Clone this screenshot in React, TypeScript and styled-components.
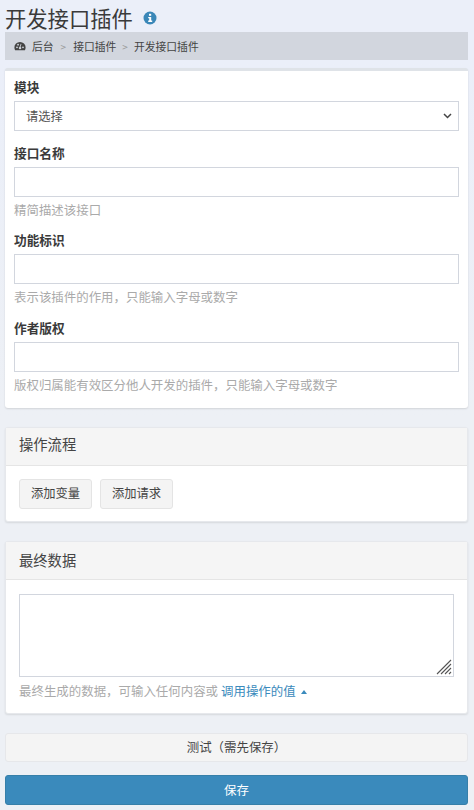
import React from "react";
import styled, { createGlobalStyle } from "styled-components";

const Global = createGlobalStyle`
  html, body { margin: 0; padding: 0; }
  body {
    width: 474px; height: 810px; overflow: hidden;
    background: linear-gradient(#ebeff9 0, #ebeff9 60px, #edf0f5 420px);
    font-family: "Noto Sans CJK SC", "Liberation Sans", sans-serif;
    color: #333;
  }
  * { box-sizing: border-box; }
`;

const Page = styled.div`
  display: flex; flex-direction: column;
  padding: 3px 6px 0 5px;
`;
const TitleRow = styled.div`
  display: flex; align-items: center; gap: 10px;
  height: 29px;
`;
const Title = styled.h1`
  margin: 0; font-size: 21.3px; font-weight: 400; line-height: 29px; color: #3a3a3a;
`;
const Crumbs = styled.div`
  display: flex; align-items: center; height: 28px;
  padding-left: 9px; background: #d2d6de; font-size: 10.8px; color: #444;
`;
const Sep = styled.span<{ $tight?: boolean }>`
  color: #999; margin: 0 ${p => (p.$tight ? 6 : 7)}px; font-size: 10px;
`;
const CrumbIcon = styled.svg`
  width: 12px; height: 12px; margin-right: 6px; fill: #444;
`;
const Card = styled.section`
  background: #fff; border-radius: 3px; border-top: 3px solid #dfe3e8;
  box-shadow: 0 1px 2px rgba(0,0,0,.12);
  margin-top: 8px; padding: 7px 9px 14px 9px; height: 340px;
`;
const Field = styled.div`
  display: flex; flex-direction: column; margin-bottom: 12.5px;
`;
const Label = styled.label`
  font-size: 12.7px; font-weight: 700; line-height: 18px; margin-bottom: 5px; color: #3a3a3a;
`;
const SelectBox = styled.div`
  height: 30px; border: 1px solid #d2d6de; display: flex; align-items: center;
  justify-content: space-between; padding: 0 6px 0 11px; font-size: 12.3px; color: #555;
`;
const Input = styled.input`
  height: 30px; border: 1px solid #d2d6de; padding: 0 10px; outline: none; display: block;
  background: #fff; width: 100%;
`;
const Help = styled.div<{ $gap?: number }>`
  font-size: 12.45px; line-height: 18px; color: #aaa; margin-top: ${p => p.$gap ?? 4}px;
`;
const Panel = styled.section<{ $height: number; $top: number }>`
  background: #fff; border-radius: 3px; border: 1px solid #e6e8ec;
  box-shadow: 0 1px 2px rgba(0,0,0,.1);
  height: ${p => p.$height}px; margin-top: ${p => p.$top}px;
`;
const PanelHead = styled.div<{ $lift: number }>`
  height: 38px; background: #f5f5f5; border-bottom: 1px solid #e5e5e5;
  display: flex; align-items: center; padding: 0 0 ${p => p.$lift}px 13px; font-size: 14.3px; color: #444;
`;
const ButtonRow = styled.div`
  display: flex; gap: 8px; padding: 13px;
`;
const SmallButton = styled.button`
  width: 73px; height: 30px; border: 1px solid #e4e4e4; border-radius: 3px; background: #f4f4f4;
  font: inherit; font-size: 12.3px; color: #444; padding: 0 0 2px;
`;
const PanelBody = styled.div`
  padding: 14px 13px 0 13px;
`;
const AreaBox = styled.div`
  position: relative; height: 83px; width: 435px; border: 1px solid #d2d6de;
`;
const Grip = styled.svg`
  position: absolute; right: 1px; bottom: 1px; width: 16px; height: 16px; stroke: #555; stroke-width: 1.1;
`;
const LinkText = styled.span`
  color: #3a8abc; margin-left: 3px;
`;
const Caret = styled.span`
  display: inline-block; margin-left: 5px; vertical-align: 2px; width: 0; height: 0;
  border-left: 3.5px solid transparent; border-right: 3.5px solid transparent;
  border-bottom: 4px solid #3a8abc;
`;
const FullButton = styled.button<{ $primary?: boolean; $height: number; $top: number }>`
  height: ${p => p.$height}px; margin-top: ${p => p.$top}px; width: 100%; border-radius: 3px;
  border: 1px solid ${p => (p.$primary ? "#367fa9" : "#e6e7ea")};
  background: ${p => (p.$primary ? "#3a8abc" : "#f4f4f4")};
  color: ${p => (p.$primary ? "#fff" : "#444")};
  font: inherit; font-size: 12.45px; padding: 0 0 ${p => (p.$primary ? 0 : 2)}px;
`;

export default function App() {
  return (
    <Page>
      <Global />
      <TitleRow>
        <Title>开发接口插件</Title>
        <svg width="14" height="14" viewBox="0 0 14 14" aria-hidden="true">
          <circle cx="7" cy="7" r="6.5" fill="#3a87b8" />
          <rect x="6" y="2.8" width="2.2" height="2" fill="#fff" />
          <path d="M5.2 6h3v3.6h1V11H5.2V9.6h1V7.3h-1z" fill="#fff" />
        </svg>
      </TitleRow>
      <Crumbs>
        <CrumbIcon viewBox="0 0 16 16" aria-hidden="true">
          <path d="M8 2.5a7.5 7.5 0 0 0-7.5 7.5c0 1.4.4 2.7 1 3.5h13c.6-.8 1-2.1 1-3.5A7.5 7.5 0 0 0 8 2.5zM4 11a1.2 1.2 0 1 1 0-2.4A1.2 1.2 0 0 1 4 11zm1.4-3.6a1.2 1.2 0 1 1 0-2.4 1.2 1.2 0 0 1 0 2.4zM8 12.4a1.6 1.6 0 0 1-.6-3.1l1.6-4.3.9.3-1.2 4a1.6 1.6 0 0 1-.7 3.1zm4-1.4a1.2 1.2 0 1 1 0-2.4 1.2 1.2 0 0 1 0 2.4z" />
        </CrumbIcon>
        后台<Sep>&gt;</Sep>接口插件<Sep $tight>&gt;</Sep>开发接口插件
      </Crumbs>

      <Card>
        <Field>
          <Label>模块</Label>
          <SelectBox>
            请选择
            <svg width="9" height="6" viewBox="0 0 9 6" aria-hidden="true">
              <path d="M1 1l3.5 3.5L8 1" fill="none" stroke="#444" strokeWidth="1.5" />
            </svg>
          </SelectBox>
        </Field>
        <Field>
          <Label>接口名称</Label>
          <Input />
          <Help>精简描述该接口</Help>
        </Field>
        <Field>
          <Label>功能标识</Label>
          <Input />
          <Help>表示该插件的作用，只能输入字母或数字</Help>
        </Field>
        <Field>
          <Label>作者版权</Label>
          <Input />
          <Help>版权归属能有效区分他人开发的插件，只能输入字母或数字</Help>
        </Field>
      </Card>

      <Panel $height={95} $top={19}>
        <PanelHead $lift={6}>操作流程</PanelHead>
        <ButtonRow>
          <SmallButton>添加变量</SmallButton>
          <SmallButton>添加请求</SmallButton>
        </ButtonRow>
      </Panel>

      <Panel $height={173} $top={19}>
        <PanelHead $lift={3}>最终数据</PanelHead>
        <PanelBody>
          <AreaBox>
            <Grip viewBox="0 0 16 16" aria-hidden="true">
              <path d="M1 15L15 1M5 15L15 5M9 15L15 9M13 15L15 13" />
            </Grip>
          </AreaBox>
          <Help $gap={5}>
            最终生成的数据，可输入任何内容或<LinkText>调用操作的值</LinkText>
            <Caret />
          </Help>
        </PanelBody>
      </Panel>

      <FullButton $height={29} $top={19}>测试（需先保存）</FullButton>
      <FullButton $primary $height={30} $top={13}>保存</FullButton>
    </Page>
  );
}
